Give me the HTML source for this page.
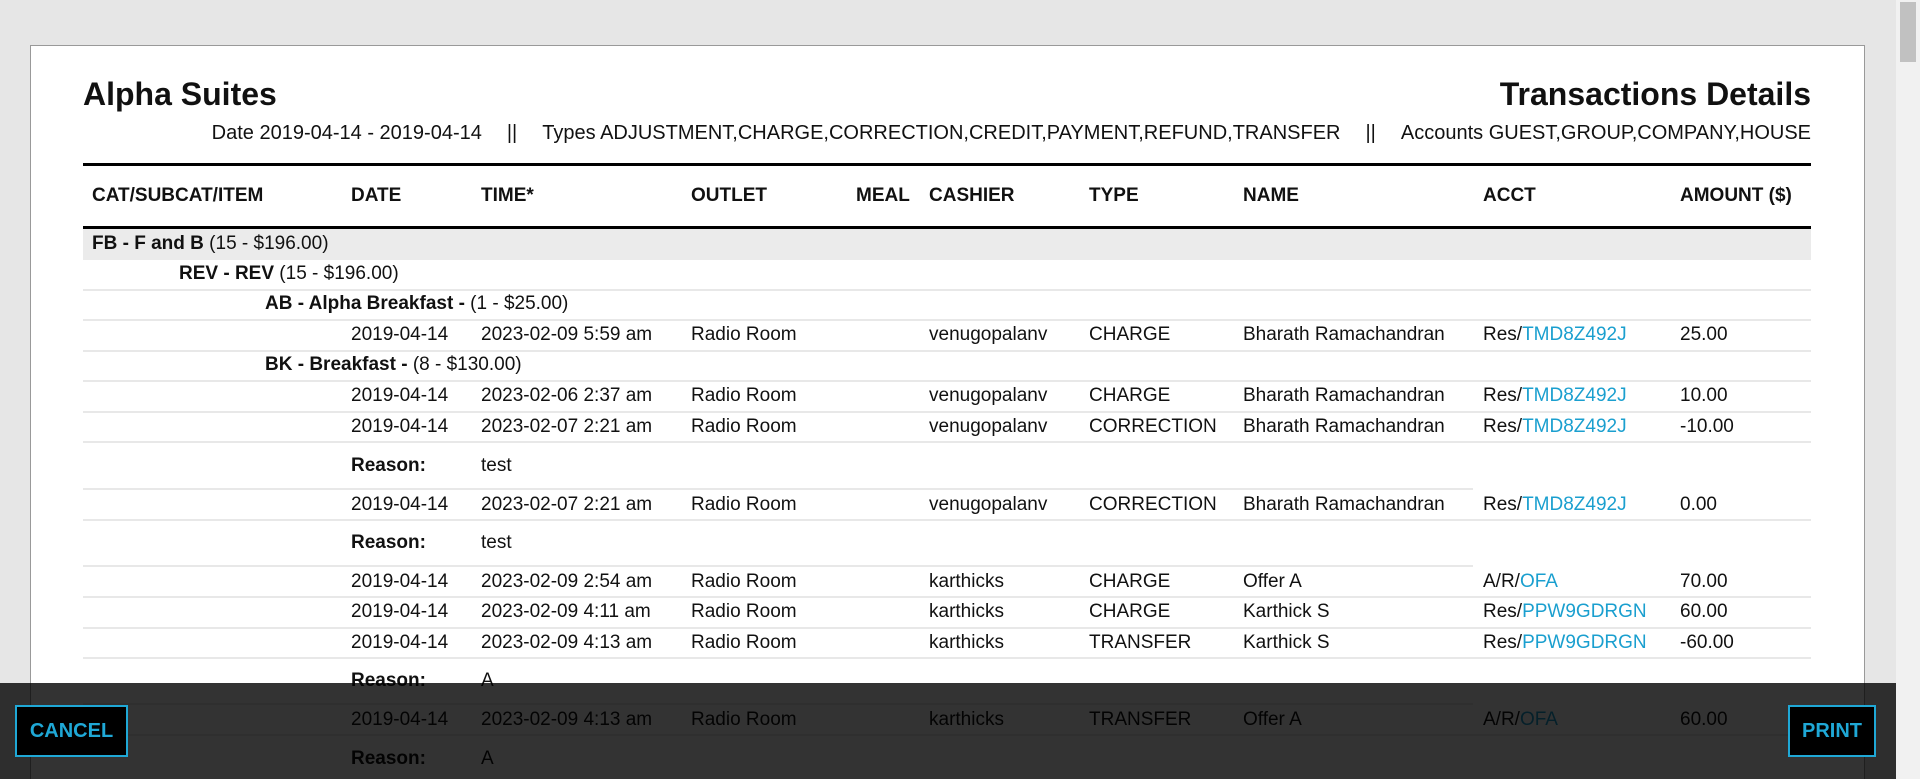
<!DOCTYPE html>
<html style="overflow:hidden;height:779px"><head><meta charset="utf-8"><style>
*{margin:0;padding:0;box-sizing:border-box}
body{width:1920px;height:779px;background:#e6e6e6;font-family:"Liberation Sans",sans-serif;color:#111;position:relative;overflow:hidden}
.card{position:absolute;left:30px;top:45px;width:1835px;height:734px;background:#fff;border:1px solid #999;border-bottom:none}
.a{position:absolute;white-space:nowrap;font-size:19px;line-height:20px}
.b{font-weight:bold}
.l{color:#1a9fcf}
.hr{position:absolute;left:83px;width:1728px;height:2px;background:#e8e8e8}
.sb{position:absolute;left:1896px;top:0;width:24px;height:779px;background:#f1f1f1}
.th{position:absolute;left:1900px;top:2px;width:16px;height:60px;background:#c1c1c1}
.foot{position:absolute;left:0;top:683px;width:1896px;height:96px;background:rgba(0,0,0,0.8)}
.btn{position:absolute;top:705px;height:52px;background:#000;border:2px solid #1fa8d6;color:#1fa8d6;font-weight:bold;font-size:20px;line-height:48px;text-align:center}
.g{display:inline-block;width:25px}
</style></head><body>
<div class="card"></div>
<div class="a b" style="left:83px;top:76px;font-size:32px;line-height:36px">Alpha Suites</div>
<div class="a b" style="right:109px;top:76px;font-size:32px;line-height:36px">Transactions Details</div>
<div class="a" style="right:109px;top:123px;font-size:20px">Date 2019-04-14 - 2019-04-14<span class="g"></span>||<span class="g"></span>Types ADJUSTMENT,CHARGE,CORRECTION,CREDIT,PAYMENT,REFUND,TRANSFER<span class="g"></span>||<span class="g"></span>Accounts GUEST,GROUP,COMPANY,HOUSE</div>
<div style="position:absolute;left:83px;top:163px;width:1728px;height:3px;background:#000"></div>
<div class="a b" style="left:92px;top:186px">CAT/SUBCAT/ITEM</div>
<div class="a b" style="left:351px;top:186px">DATE</div>
<div class="a b" style="left:481px;top:186px">TIME*</div>
<div class="a b" style="left:691px;top:186px">OUTLET</div>
<div class="a b" style="left:856px;top:186px">MEAL</div>
<div class="a b" style="left:929px;top:186px">CASHIER</div>
<div class="a b" style="left:1089px;top:186px">TYPE</div>
<div class="a b" style="left:1243px;top:186px">NAME</div>
<div class="a b" style="left:1483px;top:186px">ACCT</div>
<div class="a b" style="left:1680px;top:186px">AMOUNT ($)</div>
<div style="position:absolute;left:83px;top:226px;width:1728px;height:3px;background:#000"></div>
<div style="position:absolute;left:83px;top:229px;width:1728px;height:31px;background:#ebebeb"></div>
<div class="a" style="left:92px;top:234px"><b>FB - F and B</b> (15 - $196.00)</div>
<div class="a" style="left:179px;top:264px"><b>REV - REV</b> (15 - $196.00)</div>
<div class="hr" style="top:289px"></div>
<div class="a" style="left:265px;top:294px"><b>AB - Alpha Breakfast -</b> (1 - $25.00)</div>
<div class="hr" style="top:319px"></div>
<div class="hr" style="top:350px"></div>
<div class="a" style="left:265px;top:355px"><b>BK - Breakfast -</b> (8 - $130.00)</div>
<div class="hr" style="top:380px"></div>
<div class="hr" style="top:411px"></div>
<div class="hr" style="top:441px"></div>
<div class="a b" style="left:351px;top:456px">Reason:</div><div class="a" style="left:481px;top:456px">test</div>
<div class="hr" style="top:488px;width:1390px"></div>
<div class="hr" style="top:519px"></div>
<div class="a b" style="left:351px;top:533px">Reason:</div><div class="a" style="left:481px;top:533px">test</div>
<div class="hr" style="top:565px;width:1390px"></div>
<div class="hr" style="top:596px"></div>
<div class="hr" style="top:627px"></div>
<div class="hr" style="top:657px"></div>
<div class="a b" style="left:351px;top:671px">Reason:</div><div class="a" style="left:481px;top:671px">A</div>
<div class="hr" style="top:703px;width:1390px"></div>
<div class="hr" style="top:734px"></div>
<div class="a b" style="left:351px;top:749px">Reason:</div><div class="a" style="left:481px;top:749px">A</div>

<div class="a" style="left:351px;top:325px">2019-04-14</div><div class="a" style="left:481px;top:325px">2023-02-09 5:59 am</div><div class="a" style="left:691px;top:325px">Radio Room</div><div class="a" style="left:929px;top:325px">venugopalanv</div><div class="a" style="left:1089px;top:325px">CHARGE</div><div class="a" style="left:1243px;top:325px">Bharath Ramachandran</div><div class="a" style="left:1483px;top:325px">Res/<span class="l">TMD8Z492J</span></div><div class="a" style="left:1680px;top:325px">25.00</div>

<div class="a" style="left:351px;top:386px">2019-04-14</div><div class="a" style="left:481px;top:386px">2023-02-06 2:37 am</div><div class="a" style="left:691px;top:386px">Radio Room</div><div class="a" style="left:929px;top:386px">venugopalanv</div><div class="a" style="left:1089px;top:386px">CHARGE</div><div class="a" style="left:1243px;top:386px">Bharath Ramachandran</div><div class="a" style="left:1483px;top:386px">Res/<span class="l">TMD8Z492J</span></div><div class="a" style="left:1680px;top:386px">10.00</div>

<div class="a" style="left:351px;top:417px">2019-04-14</div><div class="a" style="left:481px;top:417px">2023-02-07 2:21 am</div><div class="a" style="left:691px;top:417px">Radio Room</div><div class="a" style="left:929px;top:417px">venugopalanv</div><div class="a" style="left:1089px;top:417px">CORRECTION</div><div class="a" style="left:1243px;top:417px">Bharath Ramachandran</div><div class="a" style="left:1483px;top:417px">Res/<span class="l">TMD8Z492J</span></div><div class="a" style="left:1680px;top:417px">-10.00</div>

<div class="a" style="left:351px;top:495px">2019-04-14</div><div class="a" style="left:481px;top:495px">2023-02-07 2:21 am</div><div class="a" style="left:691px;top:495px">Radio Room</div><div class="a" style="left:929px;top:495px">venugopalanv</div><div class="a" style="left:1089px;top:495px">CORRECTION</div><div class="a" style="left:1243px;top:495px">Bharath Ramachandran</div><div class="a" style="left:1483px;top:495px">Res/<span class="l">TMD8Z492J</span></div><div class="a" style="left:1680px;top:495px">0.00</div>

<div class="a" style="left:351px;top:572px">2019-04-14</div><div class="a" style="left:481px;top:572px">2023-02-09 2:54 am</div><div class="a" style="left:691px;top:572px">Radio Room</div><div class="a" style="left:929px;top:572px">karthicks</div><div class="a" style="left:1089px;top:572px">CHARGE</div><div class="a" style="left:1243px;top:572px">Offer A</div><div class="a" style="left:1483px;top:572px">A/R/<span class="l">OFA</span></div><div class="a" style="left:1680px;top:572px">70.00</div>

<div class="a" style="left:351px;top:602px">2019-04-14</div><div class="a" style="left:481px;top:602px">2023-02-09 4:11 am</div><div class="a" style="left:691px;top:602px">Radio Room</div><div class="a" style="left:929px;top:602px">karthicks</div><div class="a" style="left:1089px;top:602px">CHARGE</div><div class="a" style="left:1243px;top:602px">Karthick S</div><div class="a" style="left:1483px;top:602px">Res/<span class="l">PPW9GDRGN</span></div><div class="a" style="left:1680px;top:602px">60.00</div>

<div class="a" style="left:351px;top:633px">2019-04-14</div><div class="a" style="left:481px;top:633px">2023-02-09 4:13 am</div><div class="a" style="left:691px;top:633px">Radio Room</div><div class="a" style="left:929px;top:633px">karthicks</div><div class="a" style="left:1089px;top:633px">TRANSFER</div><div class="a" style="left:1243px;top:633px">Karthick S</div><div class="a" style="left:1483px;top:633px">Res/<span class="l">PPW9GDRGN</span></div><div class="a" style="left:1680px;top:633px">-60.00</div>

<div class="a" style="left:351px;top:710px">2019-04-14</div><div class="a" style="left:481px;top:710px">2023-02-09 4:13 am</div><div class="a" style="left:691px;top:710px">Radio Room</div><div class="a" style="left:929px;top:710px">karthicks</div><div class="a" style="left:1089px;top:710px">TRANSFER</div><div class="a" style="left:1243px;top:710px">Offer A</div><div class="a" style="left:1483px;top:710px">A/R/<span class="l">OFA</span></div><div class="a" style="left:1680px;top:710px">60.00</div>

<div class="sb"></div><div class="th"></div>
<div class="foot"></div>
<div class="btn" style="left:15px;width:113px">CANCEL</div>
<div class="btn" style="left:1788px;width:88px">PRINT</div>
</body></html>
